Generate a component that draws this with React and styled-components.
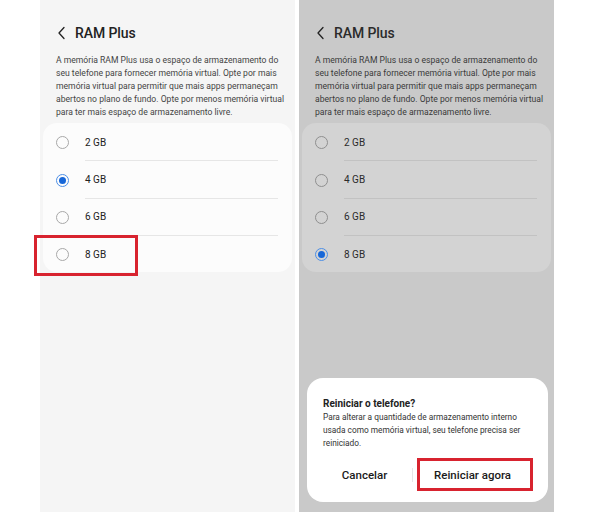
import React from "react";
import styled, { createGlobalStyle } from "styled-components";

const Global = createGlobalStyle`
  html, body { margin: 0; padding: 0; background: #fff; }
  body { font-family: Roboto, "Noto Sans", Arial, sans-serif; }
`;

const Page = styled.div`
  display: flex;
  gap: 4px;
  padding-left: 40px;
  height: 512px;
`;

const Screen = styled.div`
  width: ${(p) => p.w}px;
  height: 100%;
  background: ${(p) => (p.dim ? "#c9c9c9" : "#f5f5f5")};
  display: flex;
  flex-direction: column;
  box-sizing: border-box;
  padding: 24px 3px 10px 3px;
  color: ${(p) => (p.dim ? "#2b2b2b" : "#222")};
`;

const Header = styled.div`
  display: flex;
  align-items: center;
  height: 18px;
  padding-left: 14px;
  gap: 9px;
`;

const Title = styled.h1`
  margin: 0;
  font-size: 14px;
  font-weight: 500;
  letter-spacing: -0.1px;
`;

const Desc = styled.p`
  margin: 12px 0 0 13px;
  font-size: 8.6px;
  line-height: 13px;
  color: ${(p) => (p.dim ? "#3a3a3a" : "#444")};
  white-space: nowrap;
`;

const Card = styled.div`
  margin-top: 4px;
  background: ${(p) => (p.dim ? "#d3d3d3" : "#fcfcfc")};
  border-radius: 14px;
  padding: 1px 0 0 0;
  height: 149px;
  box-sizing: border-box;
`;

const Row = styled.div`
  position: relative;
  display: flex;
  align-items: center;
  height: 37.4px;
  padding-left: 13px;
  gap: 16px;
`;

const Label = styled.div`
  flex: 1;
  height: 100%;
  display: flex;
  align-items: center;
  font-size: 10px;
  margin-right: 14px;
  border-bottom: ${(p) => (p.last ? "none" : `1px solid ${p.dim ? "#c2c2c2" : "#e6e6e6"}`)};
  box-sizing: border-box;
`;

const Radio = styled.span`
  width: 13px;
  height: 13px;
  border-radius: 50%;
  box-sizing: border-box;
  flex-shrink: 0;
  border: 1px solid ${(p) => (p.on ? "#4d8fe6" : p.dim ? "#8f8f8f" : "#a8a8a8")};
  display: flex;
  align-items: center;
  justify-content: center;
  &::after {
    content: "";
    display: ${(p) => (p.on ? "block" : "none")};
    width: 7px;
    height: 7px;
    border-radius: 50%;
    background: #1767d8;
  }
`;

const Highlight = styled.div`
  position: absolute;
  left: -9px;
  top: -1px;
  width: 104px;
  height: 41px;
  border: 3px solid #d8232f;
  box-sizing: border-box;
`;

const Dialog = styled.div`
  margin: auto 3px 0 5px;
  background: #fff;
  border-radius: 16px;
  padding: 20px 16px 0 16px;
  height: 124px;
  box-sizing: border-box;
  color: #222;
`;

const DialogTitle = styled.div`
  font-size: 10px;
  font-weight: 700;
  margin-bottom: 2px;
`;

const DialogText = styled.div`
  font-size: 8.3px;
  line-height: 13px;
  color: #333;
  white-space: nowrap;
`;

const Buttons = styled.div`
  display: flex;
  align-items: center;
  margin-top: 10px;
  margin-left: -6px;
`;

const Btn = styled.div`
  position: relative;
  flex: ${(p) => p.grow};
  text-align: center;
  font-size: 11.5px;
  font-weight: 500;
  padding: 8px 0;
  color: #1a1a1a;
`;

const Sep = styled.span`
  width: 1px;
  height: 14px;
  background: #e6e6e6;
`;

const BtnBox = styled.div`
  position: absolute;
  left: 4px;
  right: -1px;
  top: -2px;
  bottom: -1px;
  border: 3px solid #d8232f;
`;

const Back = () => (
  <svg width="9" height="14" viewBox="0 0 9 14">
    <path d="M7 1.5L2 7l5 5.5" fill="none" stroke="#222" strokeWidth="1.3" strokeLinecap="round" strokeLinejoin="round" />
  </svg>
);

const desc = [
  "A memória RAM Plus usa o espaço de armazenamento do",
  "seu telefone para fornecer memória virtual. Opte por mais",
  "memória virtual para permitir que mais apps permaneçam",
  "abertos no plano de fundo. Opte por menos memória virtual",
  "para ter mais espaço de armazenamento livre.",
];

const sizes = ["2 GB", "4 GB", "6 GB", "8 GB"];

function Settings({ dim, selected, mark }) {
  return (
    <>
      <Header>
        <Back />
        <Title>RAM Plus</Title>
      </Header>
      <Desc dim={dim}>
        {desc.map((l, i) => (
          <React.Fragment key={i}>
            {l}
            {i < desc.length - 1 && <br />}
          </React.Fragment>
        ))}
      </Desc>
      <Card dim={dim}>
        {sizes.map((s, i) => (
          <Row key={s}>
            {mark && i === 3 && <Highlight />}
            <Radio on={s === selected} dim={dim} />
            <Label dim={dim} last={i === sizes.length - 1}>{s}</Label>
          </Row>
        ))}
      </Card>
    </>
  );
}

export default function App() {
  return (
    <>
      <Global />
      <Page>
        <Screen w={255}>
          <Settings selected="4 GB" mark />
        </Screen>
        <Screen w={255} dim>
          <Settings dim selected="8 GB" />
          <Dialog>
            <DialogTitle>Reiniciar o telefone?</DialogTitle>
            <DialogText>
              Para alterar a quantidade de armazenamento interno
              <br />
              usada como memória virtual, seu telefone precisa ser
              <br />
              reiniciado.
            </DialogText>
            <Buttons>
              <Btn grow={1}>Cancelar</Btn>
              <Sep />
              <Btn grow={1.25}>
                Reiniciar agora
                <BtnBox />
              </Btn>
            </Buttons>
          </Dialog>
        </Screen>
      </Page>
    </>
  );
}
